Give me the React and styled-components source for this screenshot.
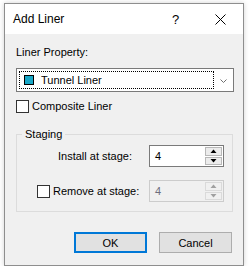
import styled, { createGlobalStyle } from "styled-components";

const GlobalStyle = createGlobalStyle`
  body {
    margin: 0;
    background: #ffffff;
    font-family: "Liberation Sans", Arial, sans-serif;
    font-size: 11px;
    color: #000000;
  }
`;

const App = () => {
  return (
    <>
      <GlobalStyle />
      <Window>
        <TitleBar>
          <Title>Add Liner</Title>
          <TitleButton>?</TitleButton>
          <TitleButton>
            <svg width="11" height="11" viewBox="0 0 11 11">
              <path d="M0.5 0.5 L10.5 10.5 M10.5 0.5 L0.5 10.5" stroke="#000" strokeWidth="1" />
            </svg>
          </TitleButton>
        </TitleBar>
        <Body>
          <Label>Liner Property:</Label>
          <Combo>
            <ComboValue>
              <Swatch $color="#17a7c7" />
              <span>Tunnel Liner</span>
            </ComboValue>
            <ComboArrow>
              <svg width="7" height="4" viewBox="0 0 7 4">
                <polyline points="0.5,0.5 3.5,3.5 6.5,0.5" fill="none" stroke="#707070" strokeWidth="1" />
              </svg>
            </ComboArrow>
          </Combo>
          <CheckRow>
            <CheckBox />
            <span>Composite Liner</span>
          </CheckRow>
          <Group>
            <Legend>Staging</Legend>
            <StageGrid>
              <StageLabel $indent={41}>Install at stage:</StageLabel>
              <SpinBox value="4" />
              <StageLabel $indent={20}>
                <CheckBox />
                <span>Remove at stage:</span>
              </StageLabel>
              <SpinBox value="4" disabled />
            </StageGrid>
          </Group>
          <ButtonRow>
            <Button $default>OK</Button>
            <Button>Cancel</Button>
          </ButtonRow>
        </Body>
      </Window>
    </>
  );
};

const SpinBox = ({ value, disabled }) => (
  <Spin $disabled={disabled}>
    <SpinValue $disabled={disabled}>{value}</SpinValue>
    <SpinButtons>
      <SpinButton $disabled={disabled}>
        <svg width="7" height="4" viewBox="0 0 7 4">
          <polygon points="0.5,4 3.5,0.5 6.5,4" fill={disabled ? "#a0a0a0" : "#000"} />
        </svg>
      </SpinButton>
      <SpinButton $disabled={disabled}>
        <svg width="7" height="4" viewBox="0 0 7 4">
          <polygon points="0.5,0 6.5,0 3.5,3.5" fill={disabled ? "#a0a0a0" : "#000"} />
        </svg>
      </SpinButton>
    </SpinButtons>
  </Spin>
);

const Window = styled.div`
  margin: 3px 0 0 4px;
  width: 240px;
  height: 263px;
  box-sizing: border-box;
  border: 1px solid #8e8e8e;
  background: #f0f0f0;
  box-shadow: 0 0 5px rgba(0, 0, 0, 0.18);
  display: flex;
  flex-direction: column;
`;

const TitleBar = styled.div`
  height: 30px;
  background: #ffffff;
  display: flex;
  align-items: center;
`;

const Title = styled.div`
  flex: 1;
  padding-left: 8px;
  font-size: 12px;
`;

const TitleButton = styled.div`
  width: 45px;
  height: 30px;
  display: flex;
  align-items: center;
  justify-content: center;
  font-size: 13px;
`;

const Body = styled.div`
  flex: 1;
  display: flex;
  flex-direction: column;
  padding: 12px 9px 0 11px;
`;

const Label = styled.div`
  line-height: 13px;
`;

const Combo = styled.div`
  margin-top: 9px;
  height: 24px;
  box-sizing: border-box;
  border: 1px solid #7a7a7a;
  background: #ffffff;
  display: flex;
  padding: 2px 0 2px 2px;
`;

const ComboValue = styled.div`
  width: 195px;
  box-sizing: border-box;
  border: 1px dotted #000000;
  display: flex;
  align-items: center;
  gap: 7px;
  padding-left: 4px;
`;

const Swatch = styled.div`
  width: 10px;
  height: 10px;
  box-sizing: border-box;
  border: 1px solid #000000;
  background: ${(p) => p.$color};
`;

const ComboArrow = styled.div`
  flex: 1;
  display: flex;
  align-items: center;
  justify-content: center;
  padding-top: 1px;
`;

const CheckRow = styled.div`
  margin-top: 8px;
  display: flex;
  align-items: center;
  gap: 3px;
  line-height: 13px;
`;

const CheckBox = styled.div`
  width: 13px;
  height: 13px;
  box-sizing: border-box;
  border: 1px solid #333333;
  background: #ffffff;
  flex-shrink: 0;
`;

const Group = styled.fieldset`
  margin: 15px 1px 0 0;
  padding: 4px 8px 9px 0;
  border: 1px solid #dcdcdc;
  min-width: 0;
`;

const Legend = styled.legend`
  margin-left: 5px;
  padding: 0 3px;
  line-height: 13px;
`;

const StageGrid = styled.div`
  display: grid;
  grid-template-columns: 1fr 75px;
  row-gap: 13px;
  align-items: center;
`;

const StageLabel = styled.div`
  padding-left: ${(p) => p.$indent}px;
  display: flex;
  align-items: center;
  gap: 3px;
  line-height: 13px;
`;

const Spin = styled.div`
  height: 22px;
  box-sizing: border-box;
  border: 1px solid ${(p) => (p.$disabled ? "#cccccc" : "#7a7a7a")};
  background: ${(p) => (p.$disabled ? "#f0f0f0" : "#ffffff")};
  display: flex;
`;

const SpinValue = styled.div`
  flex: 1;
  padding-left: 5px;
  display: flex;
  align-items: center;
  color: ${(p) => (p.$disabled ? "#6d6d7d" : "#000000")};
`;

const SpinButtons = styled.div`
  width: 17px;
  display: flex;
  flex-direction: column;
  gap: 1px;
  padding: 1px 1px 1px 0;
`;

const SpinButton = styled.div`
  flex: 1;
  box-sizing: border-box;
  border: 1px solid ${(p) => (p.$disabled ? "#dadada" : "#b8b8b8")};
  background: ${(p) => (p.$disabled ? "#f0f0f0" : "#ececec")};
  display: flex;
  align-items: center;
  justify-content: center;
`;

const ButtonRow = styled.div`
  margin-top: 20px;
  padding-right: 2px;
  display: flex;
  justify-content: flex-end;
  gap: 12px;
`;

const Button = styled.div`
  width: 73px;
  height: 21px;
  box-sizing: border-box;
  border: ${(p) => (p.$default ? "2px solid #0078d7" : "1px solid #adadad")};
  background: #e1e1e1;
  display: flex;
  align-items: center;
  justify-content: center;
`;

export default App;
